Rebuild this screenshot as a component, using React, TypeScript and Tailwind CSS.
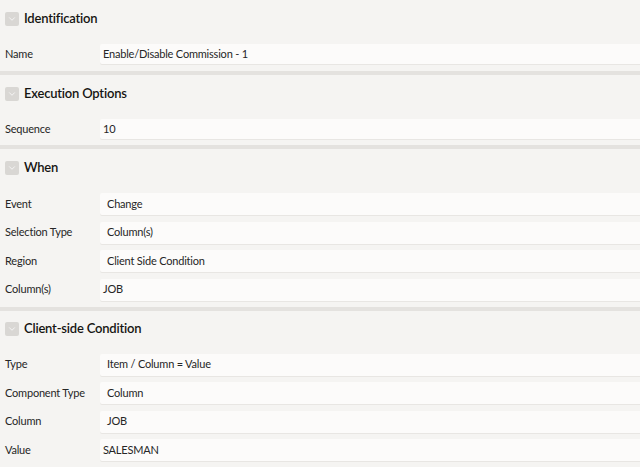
import { ChevronDown } from "lucide-react";

type Row = { label: string; value: string; select?: boolean };

const SECTIONS: { title: string; tall?: boolean; pb: string; rows: Row[] }[] = [
  { title: "Identification", pb: "pb-[7px]", rows: [{ label: "Name", value: "Enable/Disable Commission - 1" }] },
  { title: "Execution Options", pb: "pb-[6px]", rows: [{ label: "Sequence", value: "10" }] },
  {
    title: "When",
    tall: true,
    pb: "pb-[6px]",
    rows: [
      { label: "Event", value: "Change", select: true },
      { label: "Selection Type", value: "Column(s)", select: true },
      { label: "Region", value: "Client Side Condition", select: true },
      { label: "Column(s)", value: "JOB" },
    ],
  },
  {
    title: "Client-side Condition",
    tall: true,
    pb: "pb-[6px]",
    rows: [
      { label: "Type", value: "Item / Column = Value", select: true },
      { label: "Component Type", value: "Column", select: true },
      { label: "Column", value: "JOB", select: true },
      { label: "Value", value: "SALESMAN" },
    ],
  },
];

export default function App() {
  return (
    <div
      className="w-[640px] h-[467px] overflow-hidden bg-[#f5f4f2] text-[#262626]"
      style={{ fontFamily: "Lato, 'Open Sans', sans-serif" }}
    >
      {SECTIONS.map((section, idx) => (
        <div key={section.title}>
          {idx > 0 && <div className="h-[4px] bg-[#e4e2df]" />}
          <section className={section.pb}>
            <div className={`flex items-center pl-[5px] gap-[5px] ${idx === 3 ? "h-[37px]" : "h-[38px]"}`}>
              <div className="w-[14px] h-[14px] rounded-[2px] bg-[#d9d7d4] flex items-center justify-center">
                <ChevronDown className="w-[10px] h-[10px] text-white" strokeWidth={1.75} />
              </div>
              <h2 className="text-[13px] font-semibold text-[#161513] tracking-[-0.2px]">
                {section.title}
              </h2>
            </div>
            <div className="flex flex-col gap-[6.5px] pt-[6px]">
              {section.rows.map((row) => (
                <div key={row.label} className="flex items-center">
                  <span className="w-[100px] shrink-0 pl-[5px] text-[11px] tracking-[-0.2px] text-[#262626]">
                    {row.label}
                  </span>
                  <div
                    className={`flex-1 flex items-center rounded-l-[2px] bg-[#fcfbfa] shadow-[0_1px_0_#e8e6e3] text-[11px] tracking-[-0.2px] text-[#262626] ${
                      section.tall ? "h-[22px]" : "h-[20px]"
                    } ${row.select ? "pl-[7px]" : "pl-[3px]"}`}
                  >
                    {row.value}
                  </div>
                </div>
              ))}
            </div>
          </section>
        </div>
      ))}
    </div>
  );
}
